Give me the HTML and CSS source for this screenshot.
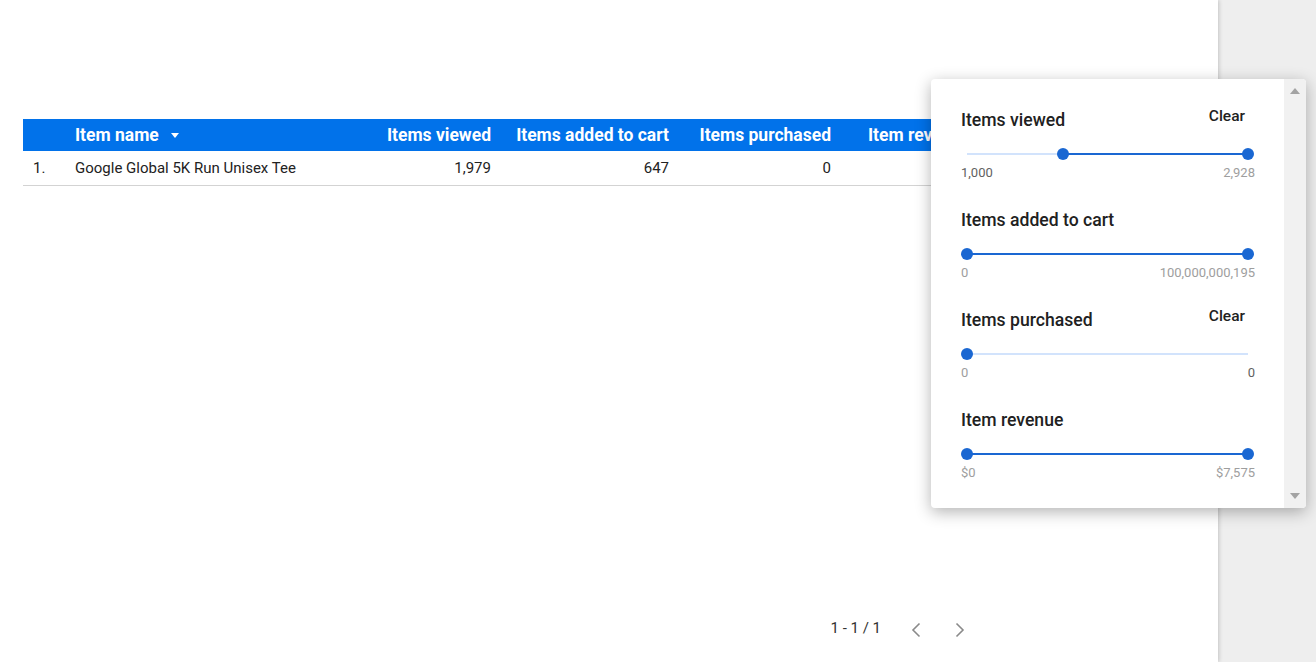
FILE: index.html
```html
<!doctype html>
<html lang="en">
<head>
  <meta charset="utf-8">
  <title>Report</title>
  <link rel="stylesheet" href="styles.css">
</head>
<body>
<div class="canvas">
  <div class="table">
    <div class="row head">
      <div class="cell idx"></div>
      <div class="cell name">Item name
        <svg class="sort" width="8" height="5" viewBox="0 0 8 5"><path d="M0 0h8L4 5z" fill="#fff"/></svg>
      </div>
      <div class="cell num c1">Items viewed</div>
      <div class="cell num c2">Items added to cart</div>
      <div class="cell num c3">Items purchased</div>
      <div class="cell c4">Item revenue</div>
    </div>
    <div class="row body">
      <div class="cell idx">1.</div>
      <div class="cell name">Google Global 5K Run Unisex Tee</div>
      <div class="cell num c1">1,979</div>
      <div class="cell num c2">647</div>
      <div class="cell num c3">0</div>
      <div class="cell num c4">$0.00</div>
    </div>
  </div>

  <div class="pager">
    <span class="range">1 - 1 / 1</span>
    <svg class="chev" width="10" height="16" viewBox="0 0 10 16"><path d="M8.5 1.5 2 8l6.5 6.5" fill="none" stroke="#8a8a8a" stroke-width="1.6"/></svg>
    <svg class="chev" width="10" height="16" viewBox="0 0 10 16"><path d="M1.5 1.5 8 8l-6.5 6.5" fill="none" stroke="#8a8a8a" stroke-width="1.6"/></svg>
  </div>
</div>

<div class="popup">
  <div class="filters">
    <div class="filter">
      <div class="title-row"><span class="title">Items viewed</span><span class="clear">Clear</span></div>
      <div class="slider">
        <div class="track">
          <div class="rail"></div>
          <div class="fill" style="left:34%;right:0"></div>
          <span class="thumb" style="left:34%"></span>
          <span class="thumb" style="left:100%"></span>
        </div>
      </div>
      <div class="values"><span class="dark">1,000</span><span>2,928</span></div>
    </div>

    <div class="filter">
      <div class="title-row"><span class="title">Items added to cart</span></div>
      <div class="slider">
        <div class="track">
          <div class="rail"></div>
          <div class="fill" style="left:0;right:0"></div>
          <span class="thumb" style="left:0%"></span>
          <span class="thumb" style="left:100%"></span>
        </div>
      </div>
      <div class="values"><span>0</span><span>100,000,000,195</span></div>
    </div>

    <div class="filter">
      <div class="title-row"><span class="title">Items purchased</span><span class="clear">Clear</span></div>
      <div class="slider">
        <div class="track">
          <div class="rail"></div>
          <span class="thumb" style="left:0%"></span>
        </div>
      </div>
      <div class="values"><span>0</span><span class="dark">0</span></div>
    </div>

    <div class="filter">
      <div class="title-row"><span class="title">Item revenue</span></div>
      <div class="slider">
        <div class="track">
          <div class="rail"></div>
          <div class="fill" style="left:0;right:0"></div>
          <span class="thumb" style="left:0%"></span>
          <span class="thumb" style="left:100%"></span>
        </div>
      </div>
      <div class="values"><span>$0</span><span>$7,575</span></div>
    </div>
  </div>
  <div class="scrollbar">
    <svg width="10" height="6" viewBox="0 0 10 6"><path d="M0 6h10L5 0z" fill="#a3a3a3"/></svg>
    <svg width="10" height="6" viewBox="0 0 10 6"><path d="M0 0h10L5 6z" fill="#a3a3a3"/></svg>
  </div>
</div>
</body>
</html>
```

FILE: styles.css
```css
html, body {
  margin: 0;
  height: 100%;
}
body {
  background: #eeeeee;
  font-family: Roboto, "Noto Sans", sans-serif;
  overflow: hidden;
}
.canvas {
  width: 1218px;
  height: 662px;
  background: #fff;
  box-shadow: 1px 0 4px rgba(0, 0, 0, 0.18);
  display: flex;
  flex-direction: column;
  box-sizing: border-box;
  padding: 119px 0 0 23px;
}
.table {
  width: 1172px;
}
.row {
  display: grid;
  grid-template-columns: 52px 295px 121px 178px 162px 200px 1fr;
  align-items: center;
}
.row.head {
  background: #0172ea;
  height: 32px;
  color: #fff;
  font-size: 17.5px;
  font-weight: 700;
}
.row.body {
  height: 34px;
  border-bottom: 1px solid #d3d3d3;
  color: #222;
  font-size: 15px;
}
.cell {
  white-space: nowrap;
}
.cell.idx {
  padding-left: 10px;
}
.cell.num {
  text-align: right;
}
.head .c4 {
  padding-left: 37px;
}
.sort {
  margin-left: 8px;
  vertical-align: 3px;
}

.pager {
  margin-top: auto;
  margin-bottom: 23px;
  display: flex;
  align-items: center;
  justify-content: flex-end;
  padding-right: 253px;
  height: 18px;
  font-size: 15px;
  color: #333;
}
.range {
  margin-right: 30px;
  line-height: 15px;
  margin-top: -3px;
}
.chev + .chev {
  margin-left: 34px;
}

.popup {
  position: absolute;
  left: 931px;
  top: 79px;
  width: 375px;
  height: 429px;
  background: #fff;
  border-radius: 4px;
  box-shadow: 0 4px 16px rgba(0, 0, 0, 0.3);
  display: flex;
  overflow: hidden;
}
.filters {
  flex: 1;
  padding: 31px 29px 0 30px;
}
.filter {
  margin-bottom: 30px;
}
.title-row {
  display: flex;
  justify-content: space-between;
  align-items: flex-start;
  height: 20px;
  margin-bottom: 18px;
}
.title {
  font-size: 17.6px;
  font-weight: 500;
  line-height: 20px;
  color: #212121;
}
.clear {
  font-size: 15.5px;
  font-weight: 500;
  line-height: 12px;
  color: #212121;
  margin-right: 10px;
}
.slider {
  height: 12px;
  padding: 0 7px 0 6px;
}
.track {
  position: relative;
  height: 12px;
}
.rail, .fill {
  position: absolute;
  top: 5px;
  height: 2px;
}
.rail {
  left: 0;
  right: 0;
  background: #d2e3fc;
}
.fill {
  background: #1a67d2;
}
.thumb {
  position: absolute;
  top: 0;
  width: 12px;
  height: 12px;
  margin-left: -6px;
  border-radius: 50%;
  background: #1a67d2;
}
.values {
  display: flex;
  justify-content: space-between;
  margin-top: 6px;
  font-size: 13px;
  line-height: 14px;
  color: #9e9e9e;
}
.values .dark {
  color: #616161;
}
.scrollbar {
  width: 22px;
  background: #f1f1f1;
  display: flex;
  flex-direction: column;
  justify-content: space-between;
  align-items: center;
  padding: 9px 0 9px;
  box-sizing: border-box;
}
```
